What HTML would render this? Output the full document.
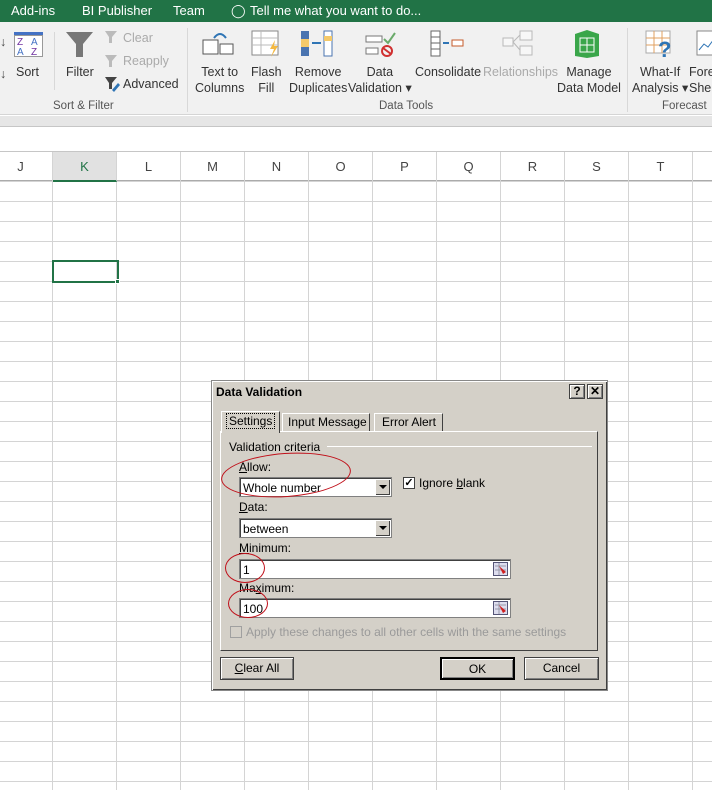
<!DOCTYPE html>
<html><head><style>
*{margin:0;padding:0;box-sizing:border-box}
body{width:712px;height:790px;overflow:hidden;background:#fff;font-family:"Liberation Sans",sans-serif;position:relative}
.a{position:absolute}
.top{left:0;top:0;width:712px;height:22px;background:#217346;color:#fff;font-size:13px}
.top span{position:absolute;top:3px}
.rib{left:0;top:22px;width:712px;height:93px;background:#f1f1f1;border-bottom:1px solid #d5d5d5}
.rl{font-size:12.5px;color:#333;text-align:center;line-height:16px;position:absolute}
.gl{font-size:11.5px;color:#555;position:absolute;top:78px}
.sep{position:absolute;width:1px;background:#d8d8d8}
.strip{left:0;top:116px;width:712px;height:11px;background:#e6e6e6;border-bottom:1px solid #c6c6c6}
.grid{left:0;top:181px;width:712px;height:609px;
background-image:linear-gradient(to right,transparent 52px,#d4d4d4 52px,#d4d4d4 53px,transparent 53px),linear-gradient(to bottom,#d4d4d4 1px,transparent 1px);
background-size:64px 20px,712px 20px;background-position:0 0,0 0}
.hdr{left:0;top:151px;width:712px;height:30px;background:#fff;border-bottom:1px solid #ababab;border-top:1px solid #c6c6c6}
.hdr div{position:absolute;top:0;height:29px;width:64px;text-align:center;line-height:29px;font-size:13px;color:#444;border-right:1px solid #d4d4d4}
.dlg{left:211px;top:380px;width:397px;height:311px;background:#d4d0c8;border:1px solid #888;box-shadow:inset 1px 1px #fff,inset -1px -1px #404040;font-size:12px;color:#000}
.dlg .a{font-family:"Liberation Sans",sans-serif;font-size:12px}
.inp{background:#fff;border:1px solid #808080;box-shadow:inset 1px 1px #404040}
.btn{background:#d4d0c8;border:1px solid #404040;box-shadow:inset 1px 1px #fff,inset -1px -1px #808080;text-align:center;line-height:20px}
.dd{position:absolute;right:1px;top:1px;width:15px;height:16px;background:#d4d0c8;box-shadow:inset 1px 1px #fff,inset -1px -1px #404040}
.dd:after{content:"";position:absolute;left:4px;top:6px;border:4px solid transparent;border-top:4px solid #000;border-bottom:0}
.ell{position:absolute;border:1px solid #c0101a;border-radius:50%}
</style></head><body>
<div class="a top">
<span style="left:11px">Add-ins</span><span style="left:82px">BI Publisher</span><span style="left:173px">Team</span>
<span style="left:231px">&#9711;</span><span style="left:250px">Tell me what you want to do...</span>
</div>
<div class="a rib">
<div class="rl" style="left:0;top:12px;color:#444">↓<br><br>↓</div>
<svg class="a" style="left:14px;top:10px" width="30" height="26"><rect x="0" y="0" width="29" height="3" fill="#4472c4"/><rect x="0.5" y="3.5" width="28" height="21" fill="#fff" stroke="#999"/><text x="3" y="13" font-size="10" fill="#7030a0" font-family="Liberation Sans">Z</text><text x="3" y="23" font-size="10" fill="#4472c4" font-family="Liberation Sans">A</text><text x="17" y="13" font-size="10" fill="#4472c4" font-family="Liberation Sans">A</text><text x="17" y="23" font-size="10" fill="#7030a0" font-family="Liberation Sans">Z</text></svg>
<div class="rl" style="left:16px;top:42px">Sort</div>
<div class="sep" style="left:54px;top:10px;height:58px"></div>
<svg class="a" style="left:65px;top:8px" width="30" height="30"><path d="M1 2h27l-10 12v13h-7V14z" fill="#777"/></svg>
<div class="rl" style="left:66px;top:42px">Filter</div>
<svg class="a" style="left:104px;top:8px" width="16" height="64"><path d="M1 1h12l-5 6v6h-3V7z" fill="#bbb"/><path d="M1 25h12l-5 6v6h-3V31z" fill="#bbb"/><path d="M1 47h12l-5 6v6h-3V53z" fill="#444"/><path d="M8 60l6-7 2 2-6 7z" fill="#2f75b5"/></svg>
<div class="rl" style="left:123px;top:8px;color:#aaa">Clear</div>
<div class="rl" style="left:123px;top:31px;color:#aaa">Reapply</div>
<div class="rl" style="left:123px;top:54px">Advanced</div>
<div class="gl" style="left:53px">Sort &amp; Filter</div>
<div class="sep" style="left:187px;top:6px;height:84px"></div>
<svg class="a" style="left:202px;top:8px" width="32" height="26"><rect x="1" y="10" width="15" height="14" fill="#fff" stroke="#555"/><rect x="18" y="14" width="13" height="10" fill="#fff" stroke="#555"/><path d="M12 8q6-8 12 0" fill="none" stroke="#2f75b5" stroke-width="2"/></svg>
<div class="rl" style="left:195px;top:42px">Text to<br>Columns</div>
<svg class="a" style="left:251px;top:8px" width="32" height="28"><rect x="1" y="1" width="26" height="24" fill="#fff" stroke="#888"/><path d="M1 8h26M1 15h26M10 1v24" stroke="#bbb"/><path d="M24 10l-5 9h4l-3 8 7-11h-4z" fill="#f4b942"/></svg>
<div class="rl" style="left:251px;top:42px">Flash<br>Fill</div>
<svg class="a" style="left:300px;top:8px" width="34" height="28"><rect x="1" y="1" width="8" height="25" fill="#4a74b0"/><rect x="1" y="9" width="8" height="8" fill="#f4c96a"/><rect x="24" y="1" width="8" height="25" fill="#fff" stroke="#4a74b0"/><rect x="24" y="6" width="8" height="5" fill="#f4c96a"/><path d="M12 13h9" stroke="#2f75b5" stroke-width="2"/></svg>
<div class="rl" style="left:289px;top:42px">Remove<br>Duplicates</div>
<svg class="a" style="left:365px;top:8px" width="32" height="28"><rect x="1" y="6" width="16" height="6" fill="#fff" stroke="#777"/><rect x="1" y="18" width="12" height="6" fill="#fff" stroke="#777"/><path d="M19 9l4 4 7-10" fill="none" stroke="#6aaa6a" stroke-width="2"/><circle cx="22" cy="21" r="5" fill="none" stroke="#d03030" stroke-width="2"/><path d="M18 18l8 6" stroke="#d03030" stroke-width="2"/></svg>
<div class="rl" style="left:348px;top:42px">Data<br>Validation ▾</div>
<svg class="a" style="left:430px;top:8px" width="36" height="28"><rect x="1" y="1" width="9" height="25" fill="#fff" stroke="#666"/><path d="M1 7h9M1 13h9M1 19h9" stroke="#666"/><path d="M13 13h6" stroke="#2f75b5" stroke-width="2"/><rect x="22" y="10" width="11" height="6" fill="#fff" stroke="#c55a2a"/></svg>
<div class="rl" style="left:415px;top:42px">Consolidate</div>
<svg class="a" style="left:502px;top:8px" width="32" height="28" opacity=".45"><rect x="1" y="8" width="10" height="8" fill="#fff" stroke="#777"/><rect x="18" y="1" width="12" height="9" fill="#fff" stroke="#777"/><rect x="18" y="16" width="12" height="9" fill="#fff" stroke="#777"/><path d="M11 12l7-7M11 12l7 8" stroke="#777"/></svg>
<div class="rl" style="left:483px;top:42px;color:#aaa">Relationships</div>
<svg class="a" style="left:572px;top:7px" width="30" height="30"><path d="M3 5l12-4 12 4v22l-12 2-12-2z" fill="#3aa64a"/><path d="M8 9h14v14H8z" fill="none" stroke="#fff"/><path d="M15 9v14M8 16h14" stroke="#fff"/></svg>
<div class="rl" style="left:557px;top:42px">Manage<br>Data Model</div>
<div class="sep" style="left:627px;top:6px;height:84px"></div>
<svg class="a" style="left:645px;top:8px" width="32" height="28"><rect x="1" y="1" width="24" height="22" fill="#fff" stroke="#aaa"/><path d="M1 8h24M1 15h24M9 1v22M17 1v22" stroke="#e0a060"/><text x="13" y="27" font-size="22" font-weight="bold" fill="#2f75b5" font-family="Liberation Sans">?</text></svg>
<div class="rl" style="left:632px;top:42px">What-If<br>Analysis ▾</div>
<svg class="a" style="left:696px;top:8px" width="16" height="28"><rect x="1" y="1" width="20" height="24" fill="#fff" stroke="#888"/><path d="M3 20l5-6 4 3 6-8" fill="none" stroke="#2f75b5"/></svg>
<div class="rl" style="left:689px;top:42px;text-align:left">Fore<br>She</div>
<div class="gl" style="left:379px">Data Tools</div>
<div class="gl" style="left:662px">Forecast</div>
</div>
<div class="a strip"></div>
<div class="a grid"></div>
<div class="a hdr">
<div style="left:-11px">J</div>
<div style="left:53px;background:#e1e1e1;color:#217346;border-bottom:2px solid #217346;height:30px">K</div>
<div style="left:117px">L</div><div style="left:181px">M</div><div style="left:245px">N</div><div style="left:309px">O</div><div style="left:373px">P</div><div style="left:437px">Q</div><div style="left:501px">R</div><div style="left:565px">S</div><div style="left:629px">T</div>
</div>
<div class="a" style="left:52px;top:260px;width:67px;height:23px;border:2px solid #217346"></div>
<div class="a" style="left:115px;top:279px;width:5px;height:5px;background:#217346;border:1px solid #fff"></div>

<div class="a dlg">
<div class="a" style="left:4px;top:4px;font-weight:bold">Data Validation</div>
<div class="a btn" style="left:357px;top:3px;width:16px;height:15px;line-height:13px;font-weight:bold">?</div>
<div class="a btn" style="left:375px;top:3px;width:16px;height:15px;line-height:13px;font-weight:bold">✕</div>
<div class="a" style="left:8px;top:50px;width:378px;height:220px;border:1px solid #fff;border-right-color:#404040;border-bottom-color:#404040"></div>
<div class="a" style="left:9px;top:30px;width:59px;height:22px;background:#d4d0c8;border:1px solid #fff;border-right-color:#404040;border-bottom:none"></div>
<div class="a" style="left:14px;top:32px;border:1px dotted #000;padding:0 2px">Settings</div>
<div class="a" style="left:70px;top:32px;width:88px;height:18px;border:1px solid #fff;border-right-color:#404040;border-bottom:none"></div>
<div class="a" style="left:76px;top:34px">Input Message</div>
<div class="a" style="left:162px;top:32px;width:69px;height:18px;border:1px solid #fff;border-right-color:#404040;border-bottom:none"></div>
<div class="a" style="left:170px;top:34px">Error Alert</div>
<div class="a" style="left:17px;top:59px">Validation criteria</div>
<div class="a" style="left:115px;top:65px;width:265px;height:1px;background:#808080;border-bottom:1px solid #fff"></div>
<div class="a" style="left:27px;top:79px"><u>A</u>llow:</div>
<div class="a inp" style="left:27px;top:96px;width:153px;height:20px"><span style="position:absolute;left:3px;top:3px">Whole number</span><div class="dd"></div></div>
<div class="a" style="left:191px;top:96px;width:12px;height:12px;background:#fff;border:1px solid #404040;font-size:11px;line-height:10px;text-align:center;font-weight:bold">✓</div>
<div class="a" style="left:207px;top:95px">Ignore <u>b</u>lank</div>
<div class="a" style="left:27px;top:119px"><u>D</u>ata:</div>
<div class="a inp" style="left:27px;top:137px;width:153px;height:20px"><span style="position:absolute;left:3px;top:3px">between</span><div class="dd"></div></div>
<div class="a" style="left:27px;top:160px"><u>M</u>inimum:</div>
<div class="a inp" style="left:27px;top:178px;width:272px;height:20px"><span style="position:absolute;left:3px;top:3px">1</span><svg style="position:absolute;right:2px;top:2px" width="15" height="14"><rect x=".5" y=".5" width="14" height="13" fill="#dde" stroke="#557"/><path d="M2 4h11M2 8h11M6 1v12" stroke="#99a"/><path d="M6 4l7 6-3 2z" fill="#d02020"/></svg></div>
<div class="a" style="left:27px;top:200px">Ma<u>x</u>imum:</div>
<div class="a inp" style="left:27px;top:217px;width:272px;height:20px"><span style="position:absolute;left:3px;top:3px">100</span><svg style="position:absolute;right:2px;top:2px" width="15" height="14"><rect x=".5" y=".5" width="14" height="13" fill="#dde" stroke="#557"/><path d="M2 4h11M2 8h11M6 1v12" stroke="#99a"/><path d="M6 4l7 6-3 2z" fill="#d02020"/></svg></div>
<div class="a" style="left:18px;top:245px;width:12px;height:12px;border:1px solid #a0a0a0"></div>
<div class="a" style="left:34px;top:244px;color:#9a9a9a">Apply these changes to all other cells with the same settings</div>
<div class="a btn" style="left:8px;top:276px;width:74px;height:23px"><u>C</u>lear All</div>
<div class="a btn" style="left:228px;top:276px;width:75px;height:23px;border:2px solid #000">OK</div>
<div class="a btn" style="left:312px;top:276px;width:75px;height:23px">Cancel</div>
<div class="ell" style="left:9px;top:72px;width:130px;height:44px;transform:rotate(-4deg)"></div>
<div class="ell" style="left:13px;top:172px;width:40px;height:30px"></div>
<div class="ell" style="left:16px;top:208px;width:40px;height:29px"></div>
</div>
</body></html>
